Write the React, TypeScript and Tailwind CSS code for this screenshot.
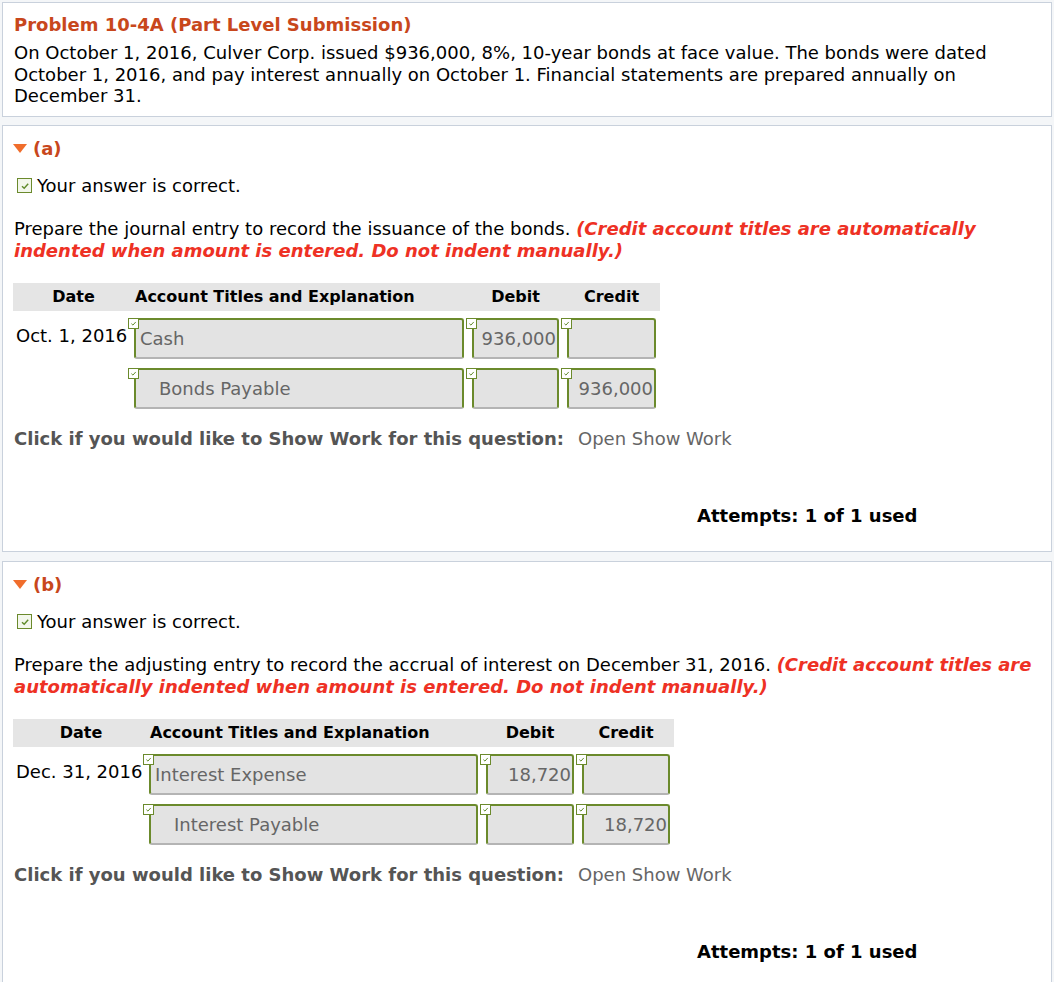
import React from "react";

type Entry = {
  date: string;
  account: string;
  debit: string;
  credit: string;
  indent?: boolean;
};

type Part = {
  label: string;
  prompt: string;
  note: string;
  dateCol: number;
  acctW: number;
  debitW: number;
  creditW: number;
  gapA: number;
  entries: Entry[];
};

const note =
  "(Credit account titles are automatically indented when amount is entered. Do not indent manually.)";

const parts: Part[] = [
  {
    label: "(a)",
    prompt: "Prepare the journal entry to record the issuance of the bonds.",
    note,
    dateCol: 121,
    acctW: 330,
    debitW: 87,
    creditW: 89,
    gapA: 8,
    entries: [
      { date: "Oct. 1, 2016", account: "Cash", debit: "936,000", credit: "" },
      { date: "", account: "Bonds Payable", debit: "", credit: "936,000", indent: true },
    ],
  },
  {
    label: "(b)",
    prompt: "Prepare the adjusting entry to record the accrual of interest on December 31, 2016.",
    note,
    dateCol: 136,
    acctW: 329,
    debitW: 88,
    creditW: 88,
    gapA: 8,
    entries: [
      { date: "Dec. 31, 2016", account: "Interest Expense", debit: "18,720", credit: "" },
      { date: "", account: "Interest Payable", debit: "", credit: "18,720", indent: true },
    ],
  },
];

// little green tick used on the answer line and above every field
const Tick = ({ size }: { size: "sm" | "lg" }) => (
  <span
    className={
      size === "lg"
        ? "inline-flex w-[15px] h-[15px] border border-[#6b8a2c] bg-[#f3f7ec] items-center justify-center"
        : "inline-flex w-[11px] h-[11px] border border-[#6b8a2c] bg-white items-center justify-center"
    }
  >
    <svg viewBox="0 0 10 10" className={size === "lg" ? "w-[10px] h-[10px]" : "w-[7px] h-[7px]"}>
      <path d="M2 5.2 L4.2 7.3 L8.2 2.8" fill="none" stroke="#5f8a2a" strokeWidth="1.4" />
    </svg>
  </span>
);

const Field = ({
  value,
  width,
  align,
  indent,
}: {
  value: string;
  width: number;
  align: "left" | "right";
  indent?: boolean;
}) => (
  <div className="relative shrink-0" style={{ width }}>
    <span className="absolute -top-[6px] -left-[6px] leading-none">
      <Tick size="sm" />
    </span>
    <div
      className={`h-[41px] rounded-[3px] border-2 border-[#6b8a2c] border-b-[#b4b4b4] bg-[#e3e3e3] flex items-center text-[#666] ${
        align === "right" ? "justify-end pr-[1px]" : indent ? "pl-[23px]" : "pl-[4px]"
      }`}
    >
      {value}
    </div>
  </div>
);

const Arrow = () => (
  <svg viewBox="0 0 14 9" className="w-[14px] h-[9px] mr-[6px]">
    <polygon points="0,0 14,0 7,9" fill="#f06d2c" />
  </svg>
);

const PartPanel = ({ part }: { part: Part }) => (
  <div className="bg-white border border-[#c9d1dc] px-[10px] pt-[12px] pb-[24px]">
    <div className="flex items-center leading-[22px] font-bold text-[#c8471c]">
      <Arrow />
      <span>{part.label}</span>
    </div>
    <div className="mt-[15px] flex items-center leading-[22px] pl-[4px]">
      <Tick size="lg" />
      <span className="ml-[5px]">Your answer is correct.</span>
    </div>
    <p className="mt-[21px] leading-[22px] pl-[1px]">
      {part.prompt} <span className="font-bold italic text-[#ee3124]">{part.note}</span>
    </p>

    <div className="mt-[21px]">
      <div className="flex bg-[#e5e5e5] h-[28px] items-center font-bold text-[16px] w-fit">
        <div className="text-center shrink-0" style={{ width: part.dateCol }}>
          Date
        </div>
        <div className="pl-[1px] shrink-0" style={{ width: part.acctW + part.gapA }}>
          Account Titles and Explanation
        </div>
        <div className="text-center shrink-0" style={{ width: part.debitW }}>
          Debit
        </div>
        <div className="w-[8px] shrink-0" />
        <div className="text-center shrink-0" style={{ width: part.creditW }}>
          Credit
        </div>
        <div className="w-[4px] shrink-0" />
      </div>
      {part.entries.map((e, i) => (
        <div key={i} className={`flex ${i === 0 ? "mt-[7px]" : "mt-[9px]"}`}>
          <div className="pl-[3px] pt-[7px] leading-[22px] whitespace-nowrap shrink-0" style={{ width: part.dateCol }}>
            {e.date}
          </div>
          <Field value={e.account} width={part.acctW} align="left" indent={e.indent} />
          <div className="shrink-0" style={{ width: part.gapA }} />
          <Field value={e.debit} width={part.debitW} align="right" />
          <div className="w-[8px] shrink-0" />
          <Field value={e.credit} width={part.creditW} align="right" />
        </div>
      ))}
    </div>

    <div className="mt-[19px] leading-[22px] pl-[1px] text-[#555]">
      <span className="font-bold">Click if you would like to Show Work for this question:</span>
      <span className="ml-[14px] text-[#666]">Open Show Work</span>
    </div>
    <div className="mt-[55px] leading-[22px] font-bold pl-[684px]">Attempts: 1 of 1 used</div>
  </div>
);

export default function App() {
  return (
    <div
      className="min-h-screen bg-[#f4f6f8] px-[2px] pt-[2px] text-[18px] text-black"
      style={{ fontFamily: '"DejaVu Sans", Verdana, sans-serif' }}
    >
      <div className="bg-white border border-[#c9d1dc] px-[11px] pt-[11px] pb-[9px]">
        <h1 className="leading-[22px] font-bold text-[#c8471c]">Problem 10-4A (Part Level Submission)</h1>
        <p className="mt-[6px] leading-[21.5px]">
          On October 1, 2016, Culver Corp. issued $936,000, 8%, 10-year bonds at face value. The bonds were dated
          October 1, 2016, and pay interest annually on October 1. Financial statements are prepared annually on
          December 31.
        </p>
      </div>
      <div className="mt-[8px] flex flex-col gap-[9px]">
        {parts.map((p) => (
          <PartPanel key={p.label} part={p} />
        ))}
      </div>
    </div>
  );
}
